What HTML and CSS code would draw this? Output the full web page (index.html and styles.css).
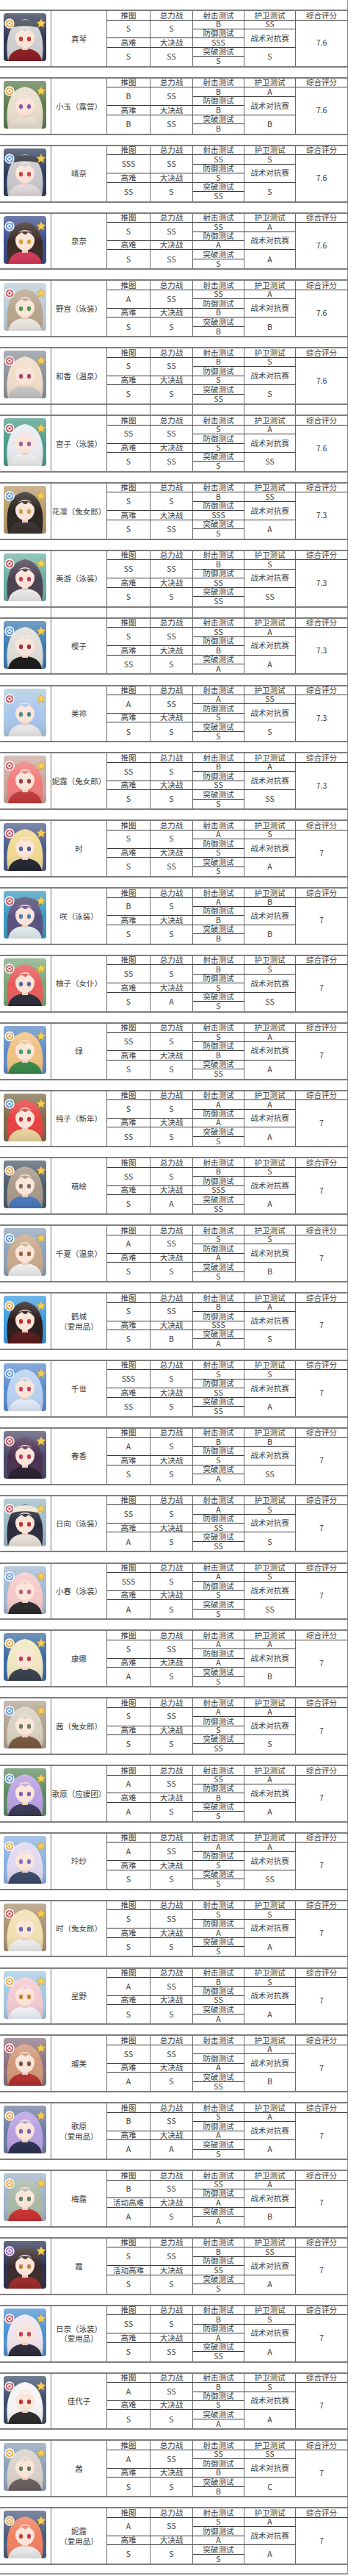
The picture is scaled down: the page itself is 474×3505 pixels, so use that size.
FILE: index.html
```html
<!DOCTYPE html>
<html lang="zh-CN">
<head>
<meta charset="utf-8">
<title>角色评分表</title>
<link rel="stylesheet" href="styles.css">
</head>
<body>
<svg class="defs" width="0" height="0" aria-hidden="true">
  <defs>
    <linearGradient id="sheen" x1="0" y1="0" x2="0" y2="1">
      <stop offset="0" stop-color="#fff" stop-opacity=".28"/>
      <stop offset=".55" stop-color="#fff" stop-opacity="0"/>
      <stop offset="1" stop-color="#000" stop-opacity=".12"/>
    </linearGradient>
    <g id="hb"><path d="M6 65 C2 40 5 12 29 8 C53 12 56 40 52 65 Z"/></g>
    <g id="bd"><path d="M6 65 C8 53 18 48 29 48 C40 48 50 53 52 65 Z"/></g>
    <g id="fc"><rect x="25" y="42" width="8" height="8" fill="#f2d2c2"/><ellipse cx="29" cy="33" rx="13" ry="14" fill="#fbe4d8"/></g>
    <g id="bn"><path d="M15 31 C14 17 44 17 43 31 C40 26 36 23 33 22 C31 27 27 25 25 22 C21 24 17 27 15 31 Z"/></g>
    <g id="ey"><ellipse cx="23.5" cy="35" rx="2.6" ry="3.2"/><ellipse cx="34.5" cy="35" rx="2.6" ry="3.2"/></g>
    <g id="hat"><path d="M7 21 C10 5 48 5 51 21 C40 16 18 16 7 21 Z"/></g>
    <g id="rl"><circle cx="8" cy="14" r="6" stroke="#fff" stroke-width="1.4"/><circle cx="8" cy="14" r="2.4" fill="none" stroke="#fff" stroke-width="1.3"/><path d="M8 9.6v2M8 16.4v2M3.6 14h2M10.4 14h2" stroke="#fff" stroke-width="1.2"/></g>
    <g id="st"><path d="M51 7.5 l1.9 4 4.3 .5 -3.2 3 .9 4.3 -3.9 -2.2 -3.9 2.2 .9 -4.3 -3.2 -3 4.3 -.5 z" fill="#f6c52c" stroke="#b8860b" stroke-width=".6"/></g>
    <g id="sh"><rect width="58" height="65" rx="4" fill="url(#sheen)"/></g>
  </defs>
</svg>

<main class="sheet">
  <div class="gap"></div>

  <div class="blk">
    <div class="av"><svg class="pic" viewBox="0 0 58 65"><rect width="58" height="65" rx="4" fill="#2e3550"/><use href="#hb" fill="#cfcfcf"/><use href="#bd" fill="#8b1c22"/><use href="#fc"/><use href="#bn" fill="#cfcfcf"/><use href="#hat" fill="#3a3f4a"/><use href="#ey" fill="#c33"/><use href="#rl" fill="#e0962e"/><use href="#st"/><use href="#sh"/></svg></div>
    <div class="nm">真琴</div>
    <div class="c k1">推图</div><div class="c k2">总力战</div><div class="c k3">射击测试</div><div class="c k4">护卫测试</div><div class="c k5">综合评分</div>
    <div class="c va">S</div><div class="c vb">S</div><div class="c vc">B</div><div class="c vd">SS</div><div class="c sc">7.6</div>
    <div class="c ldef">防御测试</div><div class="c ltac">战术对抗赛</div>
    <div class="c lhard">高难</div><div class="c lwar">大决战</div><div class="c ve">SSS</div>
    <div class="c vf">S</div><div class="c vg">SS</div><div class="c lbrk">突破测试</div><div class="c vh">S</div><div class="c vi">S</div>
  </div>
  <div class="gap"></div>

  <div class="blk">
    <div class="av"><svg class="pic" viewBox="0 0 58 65"><rect width="58" height="65" rx="4" fill="#5b7a4a"/><use href="#hb" fill="#e8dccb"/><use href="#bd" fill="#f0e6d8"/><use href="#fc"/><use href="#bn" fill="#e8dccb"/><use href="#ey" fill="#8a5ab8"/><use href="#rl" fill="#e0962e"/><use href="#st"/><use href="#sh"/></svg></div>
    <div class="nm">小玉（露营）</div>
    <div class="c k1">推图</div><div class="c k2">总力战</div><div class="c k3">射击测试</div><div class="c k4">护卫测试</div><div class="c k5">综合评分</div>
    <div class="c va">B</div><div class="c vb">SS</div><div class="c vc">B</div><div class="c vd">A</div><div class="c sc">7.6</div>
    <div class="c ldef">防御测试</div><div class="c ltac">战术对抗赛</div>
    <div class="c lhard">高难</div><div class="c lwar">大决战</div><div class="c ve">B</div>
    <div class="c vf">B</div><div class="c vg">SS</div><div class="c lbrk">突破测试</div><div class="c vh">B</div><div class="c vi">B</div>
  </div>
  <div class="gap"></div>

  <div class="blk">
    <div class="av"><svg class="pic" viewBox="0 0 58 65"><rect width="58" height="65" rx="4" fill="#2c3a5a"/><use href="#hb" fill="#c8c8cc"/><use href="#bd" fill="#e8e0e0"/><use href="#fc"/><use href="#bn" fill="#c8c8cc"/><use href="#hat" fill="#2a2a35"/><use href="#ey" fill="#c44"/><use href="#rl" fill="#3b82d6"/><use href="#st"/><use href="#sh"/></svg></div>
    <div class="nm">晴奈</div>
    <div class="c k1">推图</div><div class="c k2">总力战</div><div class="c k3">射击测试</div><div class="c k4">护卫测试</div><div class="c k5">综合评分</div>
    <div class="c va">SSS</div><div class="c vb">SS</div><div class="c vc">SS</div><div class="c vd">S</div><div class="c sc">7.6</div>
    <div class="c ldef">防御测试</div><div class="c ltac">战术对抗赛</div>
    <div class="c lhard">高难</div><div class="c lwar">大决战</div><div class="c ve">S</div>
    <div class="c vf">SS</div><div class="c vg">S</div><div class="c lbrk">突破测试</div><div class="c vh">SS</div><div class="c vi">S</div>
  </div>
  <div class="gap"></div>

  <div class="blk">
    <div class="av"><svg class="pic" viewBox="0 0 58 65"><rect width="58" height="65" rx="4" fill="#3a4a8a"/><use href="#hb" fill="#3a2a22"/><use href="#bd" fill="#d8385a"/><use href="#fc"/><use href="#bn" fill="#3a2a22"/><use href="#ey" fill="#d9a030"/><use href="#rl" fill="#3b82d6"/><use href="#st"/><use href="#sh"/></svg></div>
    <div class="nm">泉奈</div>
    <div class="c k1">推图</div><div class="c k2">总力战</div><div class="c k3">射击测试</div><div class="c k4">护卫测试</div><div class="c k5">综合评分</div>
    <div class="c va">S</div><div class="c vb">SS</div><div class="c vc">SS</div><div class="c vd">A</div><div class="c sc">7.6</div>
    <div class="c ldef">防御测试</div><div class="c ltac">战术对抗赛</div>
    <div class="c lhard">高难</div><div class="c lwar">大决战</div><div class="c ve">A</div>
    <div class="c vf">S</div><div class="c vg">SS</div><div class="c lbrk">突破测试</div><div class="c vh">S</div><div class="c vi">A</div>
  </div>
  <div class="gap"></div>

  <div class="blk">
    <div class="av"><svg class="pic" viewBox="0 0 58 65"><rect width="58" height="65" rx="4" fill="#b9ccd6"/><use href="#hb" fill="#b8a48c"/><use href="#bd" fill="#f4efe8"/><use href="#fc"/><use href="#bn" fill="#b8a48c"/><use href="#ey" fill="#4a9a4a"/><use href="#rl" fill="#c0303a"/><use href="#st"/><use href="#sh"/></svg></div>
    <div class="nm">野宫（泳装）</div>
    <div class="c k1">推图</div><div class="c k2">总力战</div><div class="c k3">射击测试</div><div class="c k4">护卫测试</div><div class="c k5">综合评分</div>
    <div class="c va">A</div><div class="c vb">SS</div><div class="c vc">SS</div><div class="c vd">A</div><div class="c sc">7.6</div>
    <div class="c ldef">防御测试</div><div class="c ltac">战术对抗赛</div>
    <div class="c lhard">高难</div><div class="c lwar">大决战</div><div class="c ve">B</div>
    <div class="c vf">S</div><div class="c vg">S</div><div class="c lbrk">突破测试</div><div class="c vh">B</div><div class="c vi">B</div>
  </div>
  <div class="gap"></div>

  <div class="blk">
    <div class="av"><svg class="pic" viewBox="0 0 58 65"><rect width="58" height="65" rx="4" fill="#8a9098"/><use href="#hb" fill="#f0dcc8"/><use href="#bd" fill="#c8c8c8"/><use href="#fc"/><use href="#bn" fill="#f0dcc8"/><use href="#ey" fill="#b04060"/><use href="#rl" fill="#c0303a"/><use href="#st"/><use href="#sh"/></svg></div>
    <div class="nm">和香（温泉）</div>
    <div class="c k1">推图</div><div class="c k2">总力战</div><div class="c k3">射击测试</div><div class="c k4">护卫测试</div><div class="c k5">综合评分</div>
    <div class="c va">S</div><div class="c vb">SS</div><div class="c vc">B</div><div class="c vd">S</div><div class="c sc">7.6</div>
    <div class="c ldef">防御测试</div><div class="c ltac">战术对抗赛</div>
    <div class="c lhard">高难</div><div class="c lwar">大决战</div><div class="c ve">S</div>
    <div class="c vf">S</div><div class="c vg">S</div><div class="c lbrk">突破测试</div><div class="c vh">SS</div><div class="c vi">S</div>
  </div>
  <div class="gap cols"><span></span><span></span><span></span><span></span><span></span><span></span><span></span></div>

  <div class="blk">
    <div class="av"><svg class="pic" viewBox="0 0 58 65"><rect width="58" height="65" rx="4" fill="#4a9a8a"/><use href="#hb" fill="#e8eaf0"/><use href="#bd" fill="#f4f4f4"/><use href="#fc"/><use href="#bn" fill="#e8eaf0"/><use href="#ey" fill="#a060a0"/><use href="#rl" fill="#c0303a"/><use href="#st"/><use href="#sh"/></svg></div>
    <div class="nm">宫子（泳装）</div>
    <div class="c k1">推图</div><div class="c k2">总力战</div><div class="c k3">射击测试</div><div class="c k4">护卫测试</div><div class="c k5">综合评分</div>
    <div class="c va">SS</div><div class="c vb">SS</div><div class="c vc">S</div><div class="c vd">A</div><div class="c sc">7.6</div>
    <div class="c ldef">防御测试</div><div class="c ltac">战术对抗赛</div>
    <div class="c lhard">高难</div><div class="c lwar">大决战</div><div class="c ve">S</div>
    <div class="c vf">S</div><div class="c vg">SS</div><div class="c lbrk">突破测试</div><div class="c vh">S</div><div class="c vi">SS</div>
  </div>
  <div class="gap"></div>

  <div class="blk">
    <div class="av"><svg class="pic" viewBox="0 0 58 65"><rect width="58" height="65" rx="4" fill="#b89a6a"/><use href="#hb" fill="#2a2420"/><use href="#bd" fill="#3a3030"/><use href="#fc"/><use href="#bn" fill="#2a2420"/><use href="#ey" fill="#d0a040"/><use href="#rl" fill="#3b82d6"/><use href="#st"/><use href="#sh"/></svg></div>
    <div class="nm">花凛（兔女郎）</div>
    <div class="c k1">推图</div><div class="c k2">总力战</div><div class="c k3">射击测试</div><div class="c k4">护卫测试</div><div class="c k5">综合评分</div>
    <div class="c va">S</div><div class="c vb">S</div><div class="c vc">B</div><div class="c vd">SS</div><div class="c sc">7.3</div>
    <div class="c ldef">防御测试</div><div class="c ltac">战术对抗赛</div>
    <div class="c lhard">高难</div><div class="c lwar">大决战</div><div class="c ve">SSS</div>
    <div class="c vf">S</div><div class="c vg">SS</div><div class="c lbrk">突破测试</div><div class="c vh">S</div><div class="c vi">A</div>
  </div>
  <div class="gap"></div>

  <div class="blk">
    <div class="av"><svg class="pic" viewBox="0 0 58 65"><rect width="58" height="65" rx="4" fill="#6ab0a0"/><use href="#hb" fill="#4a4050"/><use href="#bd" fill="#f0f0f0"/><use href="#fc"/><use href="#bn" fill="#4a4050"/><use href="#ey" fill="#c04060"/><use href="#rl" fill="#c0303a"/><use href="#st"/><use href="#sh"/></svg></div>
    <div class="nm">美游（泳装）</div>
    <div class="c k1">推图</div><div class="c k2">总力战</div><div class="c k3">射击测试</div><div class="c k4">护卫测试</div><div class="c k5">综合评分</div>
    <div class="c va">SS</div><div class="c vb">SS</div><div class="c vc">B</div><div class="c vd">S</div><div class="c sc">7.3</div>
    <div class="c ldef">防御测试</div><div class="c ltac">战术对抗赛</div>
    <div class="c lhard">高难</div><div class="c lwar">大决战</div><div class="c ve">SS</div>
    <div class="c vf">S</div><div class="c vg">S</div><div class="c lbrk">突破测试</div><div class="c vh">SS</div><div class="c vi">SS</div>
  </div>
  <div class="gap cols"><span></span><span></span><span></span><span></span><span></span><span></span><span></span></div>

  <div class="blk">
    <div class="av"><svg class="pic" viewBox="0 0 58 65"><rect width="58" height="65" rx="4" fill="#3a7ab0"/><use href="#hb" fill="#e0ddd8"/><use href="#bd" fill="#1a1a1a"/><use href="#fc"/><use href="#bn" fill="#e0ddd8"/><use href="#ey" fill="#a03040"/><use href="#rl" fill="#3b82d6"/><use href="#st"/><use href="#sh"/></svg></div>
    <div class="nm">樱子</div>
    <div class="c k1">推图</div><div class="c k2">总力战</div><div class="c k3">射击测试</div><div class="c k4">护卫测试</div><div class="c k5">综合评分</div>
    <div class="c va">S</div><div class="c vb">SS</div><div class="c vc">SS</div><div class="c vd">A</div><div class="c sc">7.3</div>
    <div class="c ldef">防御测试</div><div class="c ltac">战术对抗赛</div>
    <div class="c lhard">高难</div><div class="c lwar">大决战</div><div class="c ve">B</div>
    <div class="c vf">SS</div><div class="c vg">S</div><div class="c lbrk">突破测试</div><div class="c vh">A</div><div class="c vi">A</div>
  </div>
  <div class="gap"></div>

  <div class="blk">
    <div class="av"><svg class="pic" viewBox="0 0 58 65"><rect width="58" height="65" rx="4" fill="#a8c8e0"/><use href="#hb" fill="#a8c4ec"/><use href="#bd" fill="#f0f0f0"/><use href="#fc"/><use href="#bn" fill="#a8c4ec"/><use href="#ey" fill="#4a8a8a"/><use href="#rl" fill="#c0303a"/><use href="#st"/><use href="#sh"/></svg></div>
    <div class="nm">美祢</div>
    <div class="c k1">推图</div><div class="c k2">总力战</div><div class="c k3">射击测试</div><div class="c k4">护卫测试</div><div class="c k5">综合评分</div>
    <div class="c va">A</div><div class="c vb">SS</div><div class="c vc">A</div><div class="c vd">SS</div><div class="c sc">7.3</div>
    <div class="c ldef">防御测试</div><div class="c ltac">战术对抗赛</div>
    <div class="c lhard">高难</div><div class="c lwar">大决战</div><div class="c ve">S</div>
    <div class="c vf">S</div><div class="c vg">S</div><div class="c lbrk">突破测试</div><div class="c vh">S</div><div class="c vi">S</div>
  </div>
  <div class="gap"></div>

  <div class="blk">
    <div class="av"><svg class="pic" viewBox="0 0 58 65"><rect width="58" height="65" rx="4" fill="#c8a8a0"/><use href="#hb" fill="#f07a7a"/><use href="#bd" fill="#c83a3a"/><use href="#fc"/><use href="#bn" fill="#f07a7a"/><use href="#ey" fill="#a04040"/><use href="#rl" fill="#c0303a"/><use href="#st"/><use href="#sh"/></svg></div>
    <div class="nm">妮露（兔女郎）</div>
    <div class="c k1">推图</div><div class="c k2">总力战</div><div class="c k3">射击测试</div><div class="c k4">护卫测试</div><div class="c k5">综合评分</div>
    <div class="c va">SS</div><div class="c vb">S</div><div class="c vc">B</div><div class="c vd">A</div><div class="c sc">7.3</div>
    <div class="c ldef">防御测试</div><div class="c ltac">战术对抗赛</div>
    <div class="c lhard">高难</div><div class="c lwar">大决战</div><div class="c ve">SS</div>
    <div class="c vf">S</div><div class="c vg">S</div><div class="c lbrk">突破测试</div><div class="c vh">S</div><div class="c vi">SS</div>
  </div>
  <div class="gap"></div>

  <div class="blk">
    <div class="av"><svg class="pic" viewBox="0 0 58 65"><rect width="58" height="65" rx="4" fill="#4a5a8a"/><use href="#hb" fill="#f0d890"/><use href="#bd" fill="#202530"/><use href="#fc"/><use href="#bn" fill="#f0d890"/><use href="#ey" fill="#5060a0"/><use href="#rl" fill="#c0303a"/><use href="#st"/><use href="#sh"/></svg></div>
    <div class="nm">时</div>
    <div class="c k1">推图</div><div class="c k2">总力战</div><div class="c k3">射击测试</div><div class="c k4">护卫测试</div><div class="c k5">综合评分</div>
    <div class="c va">S</div><div class="c vb">S</div><div class="c vc">A</div><div class="c vd">S</div><div class="c sc">7</div>
    <div class="c ldef">防御测试</div><div class="c ltac">战术对抗赛</div>
    <div class="c lhard">高难</div><div class="c lwar">大决战</div><div class="c ve">S</div>
    <div class="c vf">S</div><div class="c vg">SS</div><div class="c lbrk">突破测试</div><div class="c vh">S</div><div class="c vi">A</div>
  </div>
  <div class="gap"></div>

  <div class="blk">
    <div class="av"><svg class="pic" viewBox="0 0 58 65"><rect width="58" height="65" rx="4" fill="#3a9ac0"/><use href="#hb" fill="#5a5080"/><use href="#bd" fill="#e8f0f4"/><use href="#fc"/><use href="#bn" fill="#5a5080"/><use href="#hat" fill="#4a4a70"/><use href="#ey" fill="#4a80b0"/><use href="#rl" fill="#c0303a"/><use href="#st"/><use href="#sh"/></svg></div>
    <div class="nm">咲（泳装）</div>
    <div class="c k1">推图</div><div class="c k2">总力战</div><div class="c k3">射击测试</div><div class="c k4">护卫测试</div><div class="c k5">综合评分</div>
    <div class="c va">B</div><div class="c vb">S</div><div class="c vc">A</div><div class="c vd">B</div><div class="c sc">7</div>
    <div class="c ldef">防御测试</div><div class="c ltac">战术对抗赛</div>
    <div class="c lhard">高难</div><div class="c lwar">大决战</div><div class="c ve">B</div>
    <div class="c vf">S</div><div class="c vg">S</div><div class="c lbrk">突破测试</div><div class="c vh">B</div><div class="c vi">B</div>
  </div>
  <div class="gap"></div>

  <div class="blk">
    <div class="av"><svg class="pic" viewBox="0 0 58 65"><rect width="58" height="65" rx="4" fill="#78a878"/><use href="#hb" fill="#e85a5a"/><use href="#bd" fill="#2a2a3a"/><use href="#fc"/><use href="#bn" fill="#e85a5a"/><use href="#ey" fill="#6060a0"/><use href="#rl" fill="#c0303a"/><use href="#st"/><use href="#sh"/></svg></div>
    <div class="nm">柚子（女仆）</div>
    <div class="c k1">推图</div><div class="c k2">总力战</div><div class="c k3">射击测试</div><div class="c k4">护卫测试</div><div class="c k5">综合评分</div>
    <div class="c va">SS</div><div class="c vb">S</div><div class="c vc">B</div><div class="c vd">S</div><div class="c sc">7</div>
    <div class="c ldef">防御测试</div><div class="c ltac">战术对抗赛</div>
    <div class="c lhard">高难</div><div class="c lwar">大决战</div><div class="c ve">S</div>
    <div class="c vf">S</div><div class="c vg">A</div><div class="c lbrk">突破测试</div><div class="c vh">S</div><div class="c vi">SS</div>
  </div>
  <div class="gap"></div>

  <div class="blk">
    <div class="av"><svg class="pic" viewBox="0 0 58 65"><rect width="58" height="65" rx="4" fill="#5a8ac8"/><use href="#hb" fill="#f0c080"/><use href="#bd" fill="#3a8a4a"/><use href="#fc"/><use href="#bn" fill="#f0c080"/><use href="#ey" fill="#40a060"/><use href="#rl" fill="#e0962e"/><use href="#st"/><use href="#sh"/></svg></div>
    <div class="nm">绿</div>
    <div class="c k1">推图</div><div class="c k2">总力战</div><div class="c k3">射击测试</div><div class="c k4">护卫测试</div><div class="c k5">综合评分</div>
    <div class="c va">SS</div><div class="c vb">S</div><div class="c vc">S</div><div class="c vd">A</div><div class="c sc">7</div>
    <div class="c ldef">防御测试</div><div class="c ltac">战术对抗赛</div>
    <div class="c lhard">高难</div><div class="c lwar">大决战</div><div class="c ve">B</div>
    <div class="c vf">S</div><div class="c vg">S</div><div class="c lbrk">突破测试</div><div class="c vh">SS</div><div class="c vi">A</div>
  </div>
  <div class="gap"></div>

  <div class="blk">
    <div class="av"><svg class="pic" viewBox="0 0 58 65"><rect width="58" height="65" rx="4" fill="#7a6a4a"/><use href="#hb" fill="#e84040"/><use href="#bd" fill="#f0d8a0"/><use href="#fc"/><use href="#bn" fill="#e84040"/><use href="#ey" fill="#c03040"/><use href="#rl" fill="#3b82d6"/><use href="#st"/><use href="#sh"/></svg></div>
    <div class="nm">纯子（新年）</div>
    <div class="c k1">推图</div><div class="c k2">总力战</div><div class="c k3">射击测试</div><div class="c k4">护卫测试</div><div class="c k5">综合评分</div>
    <div class="c va">S</div><div class="c vb">S</div><div class="c vc">A</div><div class="c vd">A</div><div class="c sc">7</div>
    <div class="c ldef">防御测试</div><div class="c ltac">战术对抗赛</div>
    <div class="c lhard">高难</div><div class="c lwar">大决战</div><div class="c ve">A</div>
    <div class="c vf">SS</div><div class="c vg">S</div><div class="c lbrk">突破测试</div><div class="c vh">S</div><div class="c vi">A</div>
  </div>
  <div class="gap"></div>

  <div class="blk">
    <div class="av"><svg class="pic" viewBox="0 0 58 65"><rect width="58" height="65" rx="4" fill="#4a5a6a"/><use href="#hb" fill="#a89888"/><use href="#bd" fill="#4a7ac0"/><use href="#fc"/><use href="#bn" fill="#a89888"/><use href="#ey" fill="#807060"/><use href="#rl" fill="#e0962e"/><use href="#st"/><use href="#sh"/></svg></div>
    <div class="nm">萌绘</div>
    <div class="c k1">推图</div><div class="c k2">总力战</div><div class="c k3">射击测试</div><div class="c k4">护卫测试</div><div class="c k5">综合评分</div>
    <div class="c va">SS</div><div class="c vb">S</div><div class="c vc">B</div><div class="c vd">S</div><div class="c sc">7</div>
    <div class="c ldef">防御测试</div><div class="c ltac">战术对抗赛</div>
    <div class="c lhard">高难</div><div class="c lwar">大决战</div><div class="c ve">SSS</div>
    <div class="c vf">S</div><div class="c vg">A</div><div class="c lbrk">突破测试</div><div class="c vh">SS</div><div class="c vi">A</div>
  </div>
  <div class="gap"></div>

  <div class="blk">
    <div class="av"><svg class="pic" viewBox="0 0 58 65"><rect width="58" height="65" rx="4" fill="#8aa0b8"/><use href="#hb" fill="#c8a88a"/><use href="#bd" fill="#f4f4f4"/><use href="#fc"/><use href="#bn" fill="#c8a88a"/><use href="#ey" fill="#a06040"/><use href="#rl" fill="#3b82d6"/><use href="#st"/><use href="#sh"/></svg></div>
    <div class="nm">千夏（温泉）</div>
    <div class="c k1">推图</div><div class="c k2">总力战</div><div class="c k3">射击测试</div><div class="c k4">护卫测试</div><div class="c k5">综合评分</div>
    <div class="c va">A</div><div class="c vb">SS</div><div class="c vc">S</div><div class="c vd">S</div><div class="c sc">7</div>
    <div class="c ldef">防御测试</div><div class="c ltac">战术对抗赛</div>
    <div class="c lhard">高难</div><div class="c lwar">大决战</div><div class="c ve">A</div>
    <div class="c vf">S</div><div class="c vg">S</div><div class="c lbrk">突破测试</div><div class="c vh">S</div><div class="c vi">B</div>
  </div>
  <div class="gap"></div>

  <div class="blk">
    <div class="av"><svg class="pic" viewBox="0 0 58 65"><rect width="58" height="65" rx="4" fill="#3a9ae0"/><use href="#hb" fill="#2a1a1a"/><use href="#bd" fill="#5a1a1a"/><use href="#fc"/><use href="#bn" fill="#2a1a1a"/><use href="#ey" fill="#c03030"/><use href="#rl" fill="#e0962e"/><use href="#st"/><use href="#sh"/></svg></div>
    <div class="nm">鹤城<br>（爱用品）</div>
    <div class="c k1">推图</div><div class="c k2">总力战</div><div class="c k3">射击测试</div><div class="c k4">护卫测试</div><div class="c k5">综合评分</div>
    <div class="c va">S</div><div class="c vb">SS</div><div class="c vc">B</div><div class="c vd">A</div><div class="c sc">7</div>
    <div class="c ldef">防御测试</div><div class="c ltac">战术对抗赛</div>
    <div class="c lhard">高难</div><div class="c lwar">大决战</div><div class="c ve">SSS</div>
    <div class="c vf">S</div><div class="c vg">B</div><div class="c lbrk">突破测试</div><div class="c vh">A</div><div class="c vi">S</div>
  </div>
  <div class="gap"></div>

  <div class="blk">
    <div class="av"><svg class="pic" viewBox="0 0 58 65"><rect width="58" height="65" rx="4" fill="#5a8ad0"/><use href="#hb" fill="#b8d0f0"/><use href="#bd" fill="#e8f0ff"/><use href="#fc"/><use href="#bn" fill="#b8d0f0"/><use href="#ey" fill="#d04060"/><use href="#rl" fill="#3b82d6"/><use href="#st"/><use href="#sh"/></svg></div>
    <div class="nm">千世</div>
    <div class="c k1">推图</div><div class="c k2">总力战</div><div class="c k3">射击测试</div><div class="c k4">护卫测试</div><div class="c k5">综合评分</div>
    <div class="c va">SSS</div><div class="c vb">S</div><div class="c vc">S</div><div class="c vd">S</div><div class="c sc">7</div>
    <div class="c ldef">防御测试</div><div class="c ltac">战术对抗赛</div>
    <div class="c lhard">高难</div><div class="c lwar">大决战</div><div class="c ve">SS</div>
    <div class="c vf">SS</div><div class="c vg">S</div><div class="c lbrk">突破测试</div><div class="c vh">SS</div><div class="c vi">A</div>
  </div>
  <div class="gap"></div>

  <div class="blk">
    <div class="av"><svg class="pic" viewBox="0 0 58 65"><rect width="58" height="65" rx="4" fill="#4a4a6a"/><use href="#hb" fill="#4a3050"/><use href="#bd" fill="#2a2030"/><use href="#fc"/><use href="#bn" fill="#4a3050"/><use href="#ey" fill="#c04060"/><use href="#rl" fill="#c0303a"/><use href="#st"/><use href="#sh"/></svg></div>
    <div class="nm">春香</div>
    <div class="c k1">推图</div><div class="c k2">总力战</div><div class="c k3">射击测试</div><div class="c k4">护卫测试</div><div class="c k5">综合评分</div>
    <div class="c va">A</div><div class="c vb">S</div><div class="c vc">B</div><div class="c vd">B</div><div class="c sc">7</div>
    <div class="c ldef">防御测试</div><div class="c ltac">战术对抗赛</div>
    <div class="c lhard">高难</div><div class="c lwar">大决战</div><div class="c ve">S</div>
    <div class="c vf">S</div><div class="c vg">S</div><div class="c lbrk">突破测试</div><div class="c vh">A</div><div class="c vi">SS</div>
  </div>
  <div class="gap"></div>

  <div class="blk">
    <div class="av"><svg class="pic" viewBox="0 0 58 65"><rect width="58" height="65" rx="4" fill="#9ab8c8"/><use href="#hb" fill="#2a2a3a"/><use href="#bd" fill="#f0e8e0"/><use href="#fc"/><use href="#bn" fill="#2a2a3a"/><use href="#hat" fill="#ece4d4"/><use href="#ey" fill="#c03030"/><use href="#rl" fill="#c0303a"/><use href="#st"/><use href="#sh"/></svg></div>
    <div class="nm">日向（泳装）</div>
    <div class="c k1">推图</div><div class="c k2">总力战</div><div class="c k3">射击测试</div><div class="c k4">护卫测试</div><div class="c k5">综合评分</div>
    <div class="c va">SS</div><div class="c vb">S</div><div class="c vc">A</div><div class="c vd">S</div><div class="c sc">7</div>
    <div class="c ldef">防御测试</div><div class="c ltac">战术对抗赛</div>
    <div class="c lhard">高难</div><div class="c lwar">大决战</div><div class="c ve">SS</div>
    <div class="c vf">A</div><div class="c vg">S</div><div class="c lbrk">突破测试</div><div class="c vh">SS</div><div class="c vi">S</div>
  </div>
  <div class="gap"></div>

  <div class="blk">
    <div class="av"><svg class="pic" viewBox="0 0 58 65"><rect width="58" height="65" rx="4" fill="#a0b8d0"/><use href="#hb" fill="#f4c8c8"/><use href="#bd" fill="#2a2a2a"/><use href="#fc"/><use href="#bn" fill="#f4c8c8"/><use href="#ey" fill="#c06080"/><use href="#rl" fill="#3b82d6"/><use href="#st"/><use href="#sh"/></svg></div>
    <div class="nm">小春（泳装）</div>
    <div class="c k1">推图</div><div class="c k2">总力战</div><div class="c k3">射击测试</div><div class="c k4">护卫测试</div><div class="c k5">综合评分</div>
    <div class="c va">SSS</div><div class="c vb">S</div><div class="c vc">A</div><div class="c vd">S</div><div class="c sc">7</div>
    <div class="c ldef">防御测试</div><div class="c ltac">战术对抗赛</div>
    <div class="c lhard">高难</div><div class="c lwar">大决战</div><div class="c ve">S</div>
    <div class="c vf">A</div><div class="c vg">S</div><div class="c lbrk">突破测试</div><div class="c vh">S</div><div class="c vi">SS</div>
  </div>
  <div class="gap"></div>

  <div class="blk">
    <div class="av"><svg class="pic" viewBox="0 0 58 65"><rect width="58" height="65" rx="4" fill="#3a6aa0"/><use href="#hb" fill="#f0e8c0"/><use href="#bd" fill="#3a4050"/><use href="#fc"/><use href="#bn" fill="#f0e8c0"/><use href="#ey" fill="#c04040"/><use href="#rl" fill="#e0962e"/><use href="#st"/><use href="#sh"/></svg></div>
    <div class="nm">康娜</div>
    <div class="c k1">推图</div><div class="c k2">总力战</div><div class="c k3">射击测试</div><div class="c k4">护卫测试</div><div class="c k5">综合评分</div>
    <div class="c va">S</div><div class="c vb">SS</div><div class="c vc">A</div><div class="c vd">A</div><div class="c sc">7</div>
    <div class="c ldef">防御测试</div><div class="c ltac">战术对抗赛</div>
    <div class="c lhard">高难</div><div class="c lwar">大决战</div><div class="c ve">A</div>
    <div class="c vf">A</div><div class="c vg">S</div><div class="c lbrk">突破测试</div><div class="c vh">S</div><div class="c vi">B</div>
  </div>
  <div class="gap"></div>

  <div class="blk">
    <div class="av"><svg class="pic" viewBox="0 0 58 65"><rect width="58" height="65" rx="4" fill="#b0a090"/><use href="#hb" fill="#d8d0c0"/><use href="#bd" fill="#7a5a40"/><use href="#fc"/><use href="#bn" fill="#d8d0c0"/><use href="#ey" fill="#608060"/><use href="#rl" fill="#3b82d6"/><use href="#st"/><use href="#sh"/></svg></div>
    <div class="nm">茜（兔女郎）</div>
    <div class="c k1">推图</div><div class="c k2">总力战</div><div class="c k3">射击测试</div><div class="c k4">护卫测试</div><div class="c k5">综合评分</div>
    <div class="c va">S</div><div class="c vb">SS</div><div class="c vc">A</div><div class="c vd">A</div><div class="c sc">7</div>
    <div class="c ldef">防御测试</div><div class="c ltac">战术对抗赛</div>
    <div class="c lhard">高难</div><div class="c lwar">大决战</div><div class="c ve">S</div>
    <div class="c vf">S</div><div class="c vg">S</div><div class="c lbrk">突破测试</div><div class="c vh">SS</div><div class="c vi">S</div>
  </div>
  <div class="gap"></div>

  <div class="blk">
    <div class="av"><svg class="pic" viewBox="0 0 58 65"><rect width="58" height="65" rx="4" fill="#5a8a60"/><use href="#hb" fill="#b8a0e0"/><use href="#bd" fill="#3a3a5a"/><use href="#fc"/><use href="#bn" fill="#b8a0e0"/><use href="#ey" fill="#8060b0"/><use href="#rl" fill="#3b82d6"/><use href="#st"/><use href="#sh"/></svg></div>
    <div class="nm">歌原（应援团）</div>
    <div class="c k1">推图</div><div class="c k2">总力战</div><div class="c k3">射击测试</div><div class="c k4">护卫测试</div><div class="c k5">综合评分</div>
    <div class="c va">A</div><div class="c vb">SS</div><div class="c vc">SS</div><div class="c vd">A</div><div class="c sc">7</div>
    <div class="c ldef">防御测试</div><div class="c ltac">战术对抗赛</div>
    <div class="c lhard">高难</div><div class="c lwar">大决战</div><div class="c ve">B</div>
    <div class="c vf">A</div><div class="c vg">S</div><div class="c lbrk">突破测试</div><div class="c vh">S</div><div class="c vi">A</div>
  </div>
  <div class="gap"></div>

  <div class="blk">
    <div class="av"><svg class="pic" viewBox="0 0 58 65"><rect width="58" height="65" rx="4" fill="#8ab0e0"/><use href="#hb" fill="#e0d8f0"/><use href="#bd" fill="#3a4a6a"/><use href="#fc"/><use href="#bn" fill="#e0d8f0"/><use href="#ey" fill="#8070c0"/><use href="#rl" fill="#e0962e"/><use href="#st"/><use href="#sh"/></svg></div>
    <div class="nm">玲纱</div>
    <div class="c k1">推图</div><div class="c k2">总力战</div><div class="c k3">射击测试</div><div class="c k4">护卫测试</div><div class="c k5">综合评分</div>
    <div class="c va">A</div><div class="c vb">SS</div><div class="c vc">A</div><div class="c vd">A</div><div class="c sc">7</div>
    <div class="c ldef">防御测试</div><div class="c ltac">战术对抗赛</div>
    <div class="c lhard">高难</div><div class="c lwar">大决战</div><div class="c ve">S</div>
    <div class="c vf">S</div><div class="c vg">S</div><div class="c lbrk">突破测试</div><div class="c vh">S</div><div class="c vi">SS</div>
  </div>
  <div class="gap"></div>

  <div class="blk">
    <div class="av"><svg class="pic" viewBox="0 0 58 65"><rect width="58" height="65" rx="4" fill="#a89070"/><use href="#hb" fill="#f0e0b0"/><use href="#bd" fill="#f4f4f4"/><use href="#fc"/><use href="#bn" fill="#f0e0b0"/><use href="#ey" fill="#6070b0"/><use href="#rl" fill="#c0303a"/><use href="#st"/><use href="#sh"/></svg></div>
    <div class="nm">时（兔女郎）</div>
    <div class="c k1">推图</div><div class="c k2">总力战</div><div class="c k3">射击测试</div><div class="c k4">护卫测试</div><div class="c k5">综合评分</div>
    <div class="c va">S</div><div class="c vb">SS</div><div class="c vc">S</div><div class="c vd">S</div><div class="c sc">7</div>
    <div class="c ldef">防御测试</div><div class="c ltac">战术对抗赛</div>
    <div class="c lhard">高难</div><div class="c lwar">大决战</div><div class="c ve">A</div>
    <div class="c vf">S</div><div class="c vg">S</div><div class="c lbrk">突破测试</div><div class="c vh">S</div><div class="c vi">A</div>
  </div>
  <div class="gap"></div>

  <div class="blk">
    <div class="av"><svg class="pic" viewBox="0 0 58 65"><rect width="58" height="65" rx="4" fill="#a0c8e0"/><use href="#hb" fill="#f4c8d0"/><use href="#bd" fill="#f4f8ff"/><use href="#fc"/><use href="#bn" fill="#f4c8d0"/><use href="#ey" fill="#d08030"/><use href="#rl" fill="#e0962e"/><use href="#st"/><use href="#sh"/></svg></div>
    <div class="nm">星野</div>
    <div class="c k1">推图</div><div class="c k2">总力战</div><div class="c k3">射击测试</div><div class="c k4">护卫测试</div><div class="c k5">综合评分</div>
    <div class="c va">A</div><div class="c vb">SS</div><div class="c vc">B</div><div class="c vd">S</div><div class="c sc">7</div>
    <div class="c ldef">防御测试</div><div class="c ltac">战术对抗赛</div>
    <div class="c lhard">高难</div><div class="c lwar">大决战</div><div class="c ve">SS</div>
    <div class="c vf">S</div><div class="c vg">S</div><div class="c lbrk">突破测试</div><div class="c vh">A</div><div class="c vi">A</div>
  </div>
  <div class="gap"></div>

  <div class="blk">
    <div class="av"><svg class="pic" viewBox="0 0 58 65"><rect width="58" height="65" rx="4" fill="#8a7080"/><use href="#hb" fill="#d09878"/><use href="#bd" fill="#b83030"/><use href="#fc"/><use href="#bn" fill="#d09878"/><use href="#ey" fill="#805040"/><use href="#rl" fill="#c0303a"/><use href="#st"/><use href="#sh"/></svg></div>
    <div class="nm">瑠美</div>
    <div class="c k1">推图</div><div class="c k2">总力战</div><div class="c k3">射击测试</div><div class="c k4">护卫测试</div><div class="c k5">综合评分</div>
    <div class="c va">SS</div><div class="c vb">SS</div><div class="c vc"></div><div class="c vd">A</div><div class="c sc">7</div>
    <div class="c ldef">防御测试</div><div class="c ltac">战术对抗赛</div>
    <div class="c lhard">高难</div><div class="c lwar">大决战</div><div class="c ve">A</div>
    <div class="c vf">A</div><div class="c vg">S</div><div class="c lbrk">突破测试</div><div class="c vh">SS</div><div class="c vi">B</div>
  </div>
  <div class="gap"></div>

  <div class="blk">
    <div class="av"><svg class="pic" viewBox="0 0 58 65"><rect width="58" height="65" rx="4" fill="#6a7aa0"/><use href="#hb" fill="#b8a0e0"/><use href="#bd" fill="#2a3050"/><use href="#fc"/><use href="#bn" fill="#b8a0e0"/><use href="#ey" fill="#8060b0"/><use href="#rl" fill="#e0962e"/><use href="#st"/><use href="#sh"/></svg></div>
    <div class="nm">歌原<br>（爱用品）</div>
    <div class="c k1">推图</div><div class="c k2">总力战</div><div class="c k3">射击测试</div><div class="c k4">护卫测试</div><div class="c k5">综合评分</div>
    <div class="c va">B</div><div class="c vb">SS</div><div class="c vc">S</div><div class="c vd">A</div><div class="c sc">7</div>
    <div class="c ldef">防御测试</div><div class="c ltac">战术对抗赛</div>
    <div class="c lhard">高难</div><div class="c lwar">大决战</div><div class="c ve">A</div>
    <div class="c vf">A</div><div class="c vg">A</div><div class="c lbrk">突破测试</div><div class="c vh">S</div><div class="c vi">A</div>
  </div>
  <div class="gap"></div>

  <div class="blk">
    <div class="av"><svg class="pic" viewBox="0 0 58 65"><rect width="58" height="65" rx="4" fill="#a0b0c8"/><use href="#hb" fill="#a8b8a8"/><use href="#bd" fill="#d03030"/><use href="#fc"/><use href="#bn" fill="#a8b8a8"/><use href="#ey" fill="#608060"/><use href="#rl" fill="#e0962e"/><use href="#st"/><use href="#sh"/></svg></div>
    <div class="nm">梅露</div>
    <div class="c k1">推图</div><div class="c k2">总力战</div><div class="c k3">射击测试</div><div class="c k4">护卫测试</div><div class="c k5">综合评分</div>
    <div class="c va">B</div><div class="c vb">SS</div><div class="c vc">SS</div><div class="c vd">A</div><div class="c sc">7</div>
    <div class="c ldef">防御测试</div><div class="c ltac">战术对抗赛</div>
    <div class="c lhard">活动高难</div><div class="c lwar">大决战</div><div class="c ve">A</div>
    <div class="c vf">A</div><div class="c vg">S</div><div class="c lbrk">突破测试</div><div class="c vh">A</div><div class="c vi">B</div>
  </div>
  <div class="gap"></div>

  <div class="blk">
    <div class="av"><svg class="pic" viewBox="0 0 58 65"><rect width="58" height="65" rx="4" fill="#2a3050"/><use href="#hb" fill="#3a2a2a"/><use href="#bd" fill="#a02a2a"/><use href="#fc"/><use href="#bn" fill="#3a2a2a"/><use href="#ey" fill="#c08040"/><use href="#rl" fill="#8e4ec6"/><use href="#st"/><use href="#sh"/></svg></div>
    <div class="nm">霞</div>
    <div class="c k1">推图</div><div class="c k2">总力战</div><div class="c k3">射击测试</div><div class="c k4">护卫测试</div><div class="c k5">综合评分</div>
    <div class="c va">S</div><div class="c vb">SS</div><div class="c vc">B</div><div class="c vd">SS</div><div class="c sc">7</div>
    <div class="c ldef">防御测试</div><div class="c ltac">战术对抗赛</div>
    <div class="c lhard">活动高难</div><div class="c lwar">大决战</div><div class="c ve">SS</div>
    <div class="c vf">S</div><div class="c vg">S</div><div class="c lbrk">突破测试</div><div class="c vh">S</div><div class="c vi">A</div>
  </div>
  <div class="gap"></div>

  <div class="blk">
    <div class="av"><svg class="pic" viewBox="0 0 58 65"><rect width="58" height="65" rx="4" fill="#4a90d0"/><use href="#hb" fill="#f0e4ec"/><use href="#bd" fill="#2a2a3a"/><use href="#fc"/><use href="#bn" fill="#f0e4ec"/><use href="#ey" fill="#c04060"/><use href="#rl" fill="#c0303a"/><use href="#st"/><use href="#sh"/></svg></div>
    <div class="nm">日奈（泳装）<br>（爱用品）</div>
    <div class="c k1">推图</div><div class="c k2">总力战</div><div class="c k3">射击测试</div><div class="c k4">护卫测试</div><div class="c k5">综合评分</div>
    <div class="c va">SS</div><div class="c vb">S</div><div class="c vc">B</div><div class="c vd">S</div><div class="c sc">7</div>
    <div class="c ldef">防御测试</div><div class="c ltac">战术对抗赛</div>
    <div class="c lhard">高难</div><div class="c lwar">大决战</div><div class="c ve">A</div>
    <div class="c vf">S</div><div class="c vg">SS</div><div class="c lbrk">突破测试</div><div class="c vh">SS</div><div class="c vi">A</div>
  </div>
  <div class="gap"></div>

  <div class="blk">
    <div class="av"><svg class="pic" viewBox="0 0 58 65"><rect width="58" height="65" rx="4" fill="#3a4a6a"/><use href="#hb" fill="#f4f4f4"/><use href="#bd" fill="#2a2a2a"/><use href="#fc"/><use href="#bn" fill="#f4f4f4"/><use href="#ey" fill="#c03030"/><use href="#rl" fill="#c0303a"/><use href="#st"/><use href="#sh"/></svg></div>
    <div class="nm">佳代子</div>
    <div class="c k1">推图</div><div class="c k2">总力战</div><div class="c k3">射击测试</div><div class="c k4">护卫测试</div><div class="c k5">综合评分</div>
    <div class="c va">A</div><div class="c vb">SS</div><div class="c vc">B</div><div class="c vd">S</div><div class="c sc">7</div>
    <div class="c ldef">防御测试</div><div class="c ltac">战术对抗赛</div>
    <div class="c lhard">高难</div><div class="c lwar">大决战</div><div class="c ve">S</div>
    <div class="c vf">S</div><div class="c vg">S</div><div class="c lbrk">突破测试</div><div class="c vh">A</div><div class="c vi">A</div>
  </div>
  <div class="gap"></div>

  <div class="blk">
    <div class="av"><svg class="pic" viewBox="0 0 58 65"><rect width="58" height="65" rx="4" fill="#8aa0b8"/><use href="#hb" fill="#d8d0c8"/><use href="#bd" fill="#6a6060"/><use href="#fc"/><use href="#bn" fill="#d8d0c8"/><use href="#ey" fill="#608060"/><use href="#rl" fill="#e0962e"/><use href="#st"/><use href="#sh"/></svg></div>
    <div class="nm">茜</div>
    <div class="c k1">推图</div><div class="c k2">总力战</div><div class="c k3">射击测试</div><div class="c k4">护卫测试</div><div class="c k5">综合评分</div>
    <div class="c va">A</div><div class="c vb">SS</div><div class="c vc">SS</div><div class="c vd">SS</div><div class="c sc">7</div>
    <div class="c ldef">防御测试</div><div class="c ltac">战术对抗赛</div>
    <div class="c lhard">高难</div><div class="c lwar">大决战</div><div class="c ve">B</div>
    <div class="c vf">S</div><div class="c vg">S</div><div class="c lbrk">突破测试</div><div class="c vh">B</div><div class="c vi">C</div>
  </div>
  <div class="gap"></div>

  <div class="blk">
    <div class="av"><svg class="pic" viewBox="0 0 58 65"><rect width="58" height="65" rx="4" fill="#4a5a7a"/><use href="#hb" fill="#f08060"/><use href="#bd" fill="#f0f0f0"/><use href="#fc"/><use href="#bn" fill="#f08060"/><use href="#ey" fill="#c04040"/><use href="#rl" fill="#e0962e"/><use href="#st"/><use href="#sh"/></svg></div>
    <div class="nm">妮露<br>（爱用品）</div>
    <div class="c k1">推图</div><div class="c k2">总力战</div><div class="c k3">射击测试</div><div class="c k4">护卫测试</div><div class="c k5">综合评分</div>
    <div class="c va">A</div><div class="c vb">SS</div><div class="c vc">S</div><div class="c vd">A</div><div class="c sc">7</div>
    <div class="c ldef">防御测试</div><div class="c ltac">战术对抗赛</div>
    <div class="c lhard">高难</div><div class="c lwar">大决战</div><div class="c ve">A</div>
    <div class="c vf">S</div><div class="c vg">S</div><div class="c lbrk">突破测试</div><div class="c vh">S</div><div class="c vi">A</div>
  </div>
  <div class="gap end"></div>
</main>
</body>
</html>
```

FILE: styles.css
```css
* {
  box-sizing: border-box;
}

html, body {
  margin: 0;
  padding: 0;
  background: #ffffff;
}

body {
  font-family: "Noto Sans CJK SC", "Noto Sans", "Liberation Sans", sans-serif;
  font-size: 10.5px;
  color: #3c3c3c;
}

.defs {
  display: block;
  width: 0;
  height: 0;
  overflow: hidden;
}

.sheet {
  width: 474px;
  display: flex;
  flex-direction: column;
}

.gap {
  height: 13.124px;
  border-right: 1px solid #8a8a8a;
}

.gap.cols {
  display: grid;
  grid-template-columns: 70px 76px 59px 58px 70px 70px 70px;
}

.gap.cols span {
  border-right: 1px solid #6a6a6a;
}

.gap.cols span:last-child {
  border-right: 0;
}

.gap.end {
  border-bottom: 2px solid #9a9a9a;
}

.blk {
  display: grid;
  grid-template-columns: 70px 76px 59px 58px 70px 70px 70px;
  grid-template-rows: repeat(6, 1fr);
  height: 78.74px;
  border-top: 2px solid #7e7e7e;
  border-bottom: 2px solid #7e7e7e;
  border-right: 1px solid #7e7e7e;
}

.av {
  grid-column: 1;
  grid-row: 1 / 7;
  border-right: 1px solid #6a6a6a;
  padding: 3px 0 0 5px;
}

.pic {
  display: block;
  width: 58px;
  height: 65px;
}

.nm {
  grid-column: 2;
  grid-row: 1 / 7;
  border-right: 1px solid #6a6a6a;
  display: flex;
  align-items: center;
  justify-content: center;
  text-align: center;
  line-height: 1.3;
  white-space: nowrap;
  font-size: 10.5px;
}

.c {
  display: flex;
  align-items: center;
  justify-content: center;
  line-height: 1;
  white-space: nowrap;
  border-right: 1px solid #6a6a6a;
}

/* header row */
.k1 { grid-column: 3; grid-row: 1; }
.k2 { grid-column: 4; grid-row: 1; }
.k3 { grid-column: 5; grid-row: 1; }
.k4 { grid-column: 6; grid-row: 1; }
.k5 { grid-column: 7; grid-row: 1; border-right: 0; }

/* values / labels */
.va { grid-column: 3; grid-row: 2 / 4; }
.vb { grid-column: 4; grid-row: 2 / 4; }
.vc { grid-column: 5; grid-row: 2; }
.vd { grid-column: 6; grid-row: 2; }
.sc { grid-column: 7; grid-row: 2 / 7; border-right: 0; }

.ldef { grid-column: 5; grid-row: 3; }
.ltac { grid-column: 6; grid-row: 3 / 5; }

.lhard { grid-column: 3; grid-row: 4; }
.lwar { grid-column: 4; grid-row: 4; }
.ve { grid-column: 5; grid-row: 4; }

.vf { grid-column: 3; grid-row: 5 / 7; }
.vg { grid-column: 4; grid-row: 5 / 7; }
.lbrk { grid-column: 5; grid-row: 5; }
.vh { grid-column: 5; grid-row: 6; }
.vi { grid-column: 6; grid-row: 5 / 7; }

.k1, .k2, .k3, .k4, .k5,
.va, .vb, .vc, .vd,
.ldef, .ltac, .lhard, .lwar, .ve, .lbrk {
  border-bottom: 1px solid #3a3a3a;
}
```
